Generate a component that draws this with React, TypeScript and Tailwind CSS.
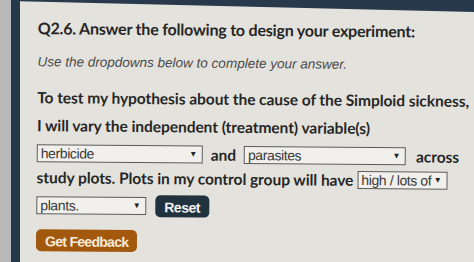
import React from 'react';

const Select = ({ value, w }: { value: string; w: string }) => (
  <div className={`${w} h-[18px] shrink-0 flex items-center justify-between border border-[#5a5a5a] bg-[#f1f0ec] pl-[3px] pr-[5px] font-['Liberation_Sans',sans-serif] text-[14px] font-normal leading-none tracking-[-0.4px] text-[#3a3a3a] whitespace-nowrap`}>
    <span>{value}</span>
    <span className="text-[8px] text-[#222]">▼</span>
  </div>
);

const App = () => {
  return (
    <div className="w-[474px] h-[262px] overflow-hidden flex bg-[#b4b4b4]">
      {/* left edge */}
      <div className="w-[11px] shrink-0 bg-[#b9b9b9]" />
      <div className="w-[9px] shrink-0 bg-[#26394a]" />

      {/* page */}
      <div className="flex-1 flex flex-col bg-[#e4e2dd]">
        <div className="h-[12px] shrink-0 bg-[#27394a] [clip-path:polygon(0_0,100%_0,100%_100%,0_10%)]" />
        <div className="origin-top-left rotate-[0.5deg] pl-[18px] pt-[6px] font-['Lato',sans-serif] text-[#262626]">
          <h2 className="text-[16px] font-bold leading-[20px] tracking-[-0.2px]">
            Q2.6. Answer the following to design your experiment:
          </h2>
          <p className="mt-[14px] font-['Liberation_Sans',sans-serif] text-[13.5px] italic leading-[20px] text-[#4a4a4a]">
            Use the dropdowns below to complete your answer.
          </p>

          <div className="mt-[13px] text-[15.5px] font-bold leading-[24px] tracking-[-0.05px]">
            <p>To test my hypothesis about the cause of the Simploid sickness,</p>
            <p className="mt-[4px]">I will vary the independent (treatment) variable(s)</p>
            <div className="mt-[2px] flex items-center gap-[8px] h-[28px]">
              <Select value="herbicide" w="w-[166px]" />
              <span>and</span>
              <Select value="parasites" w="w-[162px]" />
              <span className="ml-[2px]">across</span>
            </div>
            <div className="flex items-center gap-[4px] h-[20px] whitespace-nowrap">
              <span>study plots. Plots in my control group will have</span>
              <Select value="high / lots of" w="w-[90px]" />
            </div>
            <div className="mt-[4px] flex items-center gap-[9px] h-[28px]">
              <Select value="plants." w="w-[110px]" />
              <button className="h-[22px] rounded-[5px] bg-[#1f323e] px-[9px] font-['Liberation_Sans',sans-serif] text-[14px] font-bold tracking-[-0.5px] text-[#f2f2f2]">
                Reset
              </button>
            </div>
            <button className="mt-[10px] h-[22px] rounded-[5px] bg-[#a2580d] px-[9px] font-['Liberation_Sans',sans-serif] text-[14px] font-bold tracking-[-0.7px] text-[#f6ead8]">
              Get Feedback
            </button>
          </div>
        </div>
      </div>
    </div>
  );
};

export default App;
